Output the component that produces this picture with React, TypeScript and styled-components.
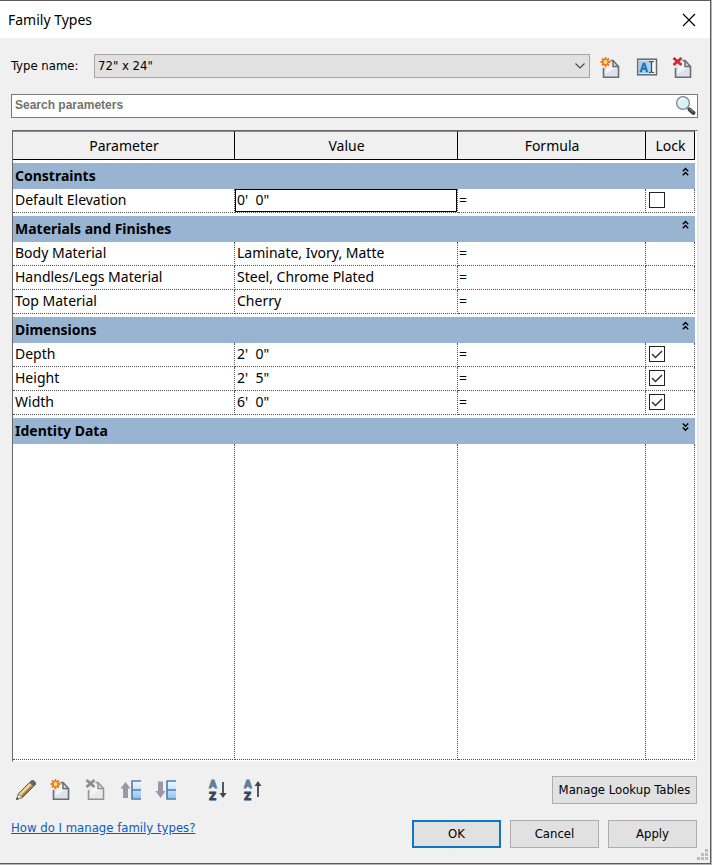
import React, { useState } from "react";
import styled, { createGlobalStyle, css } from "styled-components";

const uiFont = '"DejaVu Sans Condensed", Tahoma, "Noto Sans", sans-serif';
const gridFont = '"Noto Sans", "Open Sans", sans-serif';

const GlobalStyle = createGlobalStyle`
  *, *::before, *::after { box-sizing: border-box; }
  body { margin: 0; background: #a9a9a9; }
`;

const Desktop = styled.div`
  height: 100vh;
  min-height: 640px;
  padding: 0 1px 1px 0;
  background: #b4b4b4;
`;

const Dialog = styled.main`
  display: flex;
  flex-direction: column;
  height: 100%;
  border: 1px solid #5c5c5c;
  border-left: 0;
  background: #f0f0f0;
  color: #000;
  font: 13px/20px ${uiFont};
`;

const TitleBar = styled.header`
  display: flex;
  align-items: center;
  justify-content: space-between;
  height: 37px;
  padding: 0 14px 0 8px;
  background: #fff;
`;

const Title = styled.h1`
  margin: 0;
  font: 14px/20px ${gridFont};
`;

const IconButton = styled.button`
  display: flex;
  align-items: center;
  justify-content: center;
  padding: 0;
  border: 0;
  background: none;
  color: inherit;
`;

const Body = styled.div`
  display: flex;
  flex: 1;
  flex-direction: column;
  min-height: 0;
  padding: 16px 12px 15px 11px;
`;

const TypeRow = styled.div`
  display: flex;
  align-items: center;
  height: 24px;
`;

const TypeLabel = styled.label`
  flex: 0 0 83px;
`;

const SelectWrap = styled.div`
  display: grid;
  flex: 1;
  align-items: center;

  > * { grid-area: 1 / 1; }
  > svg { justify-self: end; margin-right: 4px; pointer-events: none; }
`;

const TypeSelect = styled.select`
  width: 100%;
  height: 24px;
  padding: 0 20px 0 3px;
  border: 1px solid #a6a6a6;
  border-radius: 0;
  background: #e1e1e1;
  color: #000;
  font: 13px/20px ${uiFont};
  appearance: none;
`;

const TypeActions = styled.div`
  display: flex;
  gap: 14px;
  margin: 0 4px 0 10px;
  padding-top: 3px;
`;

const SearchBox = styled.div`
  display: flex;
  align-items: center;
  height: 24px;
  margin-top: 16px;
  border: 1px solid #7a7a7a;
  background: #fff;
`;

const SearchInput = styled.input`
  flex: 1;
  min-width: 0;
  height: 22px;
  padding: 0 3px 2px;
  border: 0;
  outline: 0;
  background: transparent;
  font: bold 12px/20px "Liberation Sans", Arial, sans-serif;

  &::placeholder { color: #72726a; opacity: 1; }
`;

const GridFrame = styled.div`
  flex: 1;
  min-height: 0;
  margin: 12px 0 0 1px;
  padding: 0 2px 1px 0;
  border: 1px solid;
  border-color: #696969 #e3e3e3 #f8f8f8 #696969;
  background: #fff;
`;

const Grid = styled.table`
  width: 100%;
  height: 100%;
  table-layout: fixed;
  border-collapse: separate;
  border-spacing: 0;
  font: 14px/20px ${gridFont};
`;

const Column = styled.col<{ $width?: string }>`
  width: ${(p) => p.$width ?? "auto"};
`;

const HeadCell = styled.th`
  height: 29px;
  padding: 1px 0 0 1px;
  border-top: 1px solid #8a8a8a;
  border-right: 1px solid #000;
  border-bottom: 1px solid #000;
  background: #f0f0f0;
  font-weight: 400;
`;

const GapRow = styled.tr`
  height: 3px;
  td { padding: 0; }
`;

const BandCell = styled.th`
  height: 26px;
  padding: 0 0 0 2px;
  background: #99b4d1;
  text-align: left;
`;

const BandContent = styled.div`
  display: flex;
  justify-content: space-between;
  height: 26px;
  line-height: 26px;
`;

const BandToggle = styled(IconButton)`
  width: 19px;
  height: 17px;
`;

const cell = css`
  height: 24px;
  padding: 0 2px 2px;
  border-right: 1px dotted #555;
  border-bottom: 1px dotted #555;
  font-weight: 400;
  text-align: left;
  white-space: pre;
`;

const NameCell = styled.th`${cell}`;
const DataCell = styled.td<{ $edit?: boolean; $formula?: boolean }>`
  ${cell}
  ${(p) => p.$edit && "padding: 0;"}
  ${(p) => p.$formula && "padding-left: 1px;"}
`;

const LockCell = styled.td`
  ${cell}
  padding: 0 3px 1px;
`;

const FillCell = styled.td`
  ${cell}
  height: auto;
`;

const ValueInput = styled.input`
  display: block;
  width: 100%;
  height: 23px;
  padding: 0 1px 2px;
  border: 1px solid #000;
  border-radius: 0;
  outline: 0;
  background: #fff;
  font: 14px/20px ${gridFont};
`;

const LockBox = styled.input`
  width: 16px;
  height: 16px;
  margin: 0;
  border: 1px solid #222;
  background: #fff;
  appearance: none;
`;

const CheckWrap = styled.label`
  display: grid;
  width: 16px;
  height: 16px;

  > * { grid-area: 1 / 1; }
  > svg { pointer-events: none; }
  input:not(:checked) + svg { visibility: hidden; }
`;

const FooterRow = styled.div<{ $top: number }>`
  display: flex;
  align-items: center;
  justify-content: space-between;
  height: 28px;
  margin-top: ${(p) => p.$top}px;
`;

const ToolGroup = styled.div`
  display: flex;
  gap: 13px;
  margin-left: 4px;
  padding-bottom: 1px;
`;

const SortGroup = styled.div`
  display: flex;
  gap: 13px;
  margin-left: 17px;
`;

const Buttons = styled.div`
  display: flex;
  gap: 9px;
  padding-right: 1px;
`;

const PushButton = styled.button<{ $primary?: boolean; $wide?: boolean }>`
  width: ${(p) => (p.$wide ? 145 : 89)}px;
  height: 28px;
  padding: 0;
  border: ${(p) => (p.$primary ? "2px solid #0f76c4" : "1px solid #adadad")};
  border-radius: 0;
  background: #e1e1e1;
  color: #000;
  font: 13px/20px ${uiFont};
  white-space: nowrap;
`;

const HelpLink = styled.a`
  align-self: flex-start;
  margin-top: -2px;
  color: #0b5cc0;
`;

const Grip = styled.div`
  display: flex;
  justify-content: flex-end;
  height: 14px;
  margin-top: -14px;
  padding: 0 1px 0 0;
`;

const CloseIcon = () => (
  <svg width="14" height="14" viewBox="0 0 14 14" stroke="#000" strokeWidth="1.2">
    <path d="M1 1 13 13M13 1 1 13" />
  </svg>
);

const ChevronIcon = () => (
  <svg width="12" height="8" viewBox="0 0 12 8" fill="none" stroke="#444" strokeWidth="1.1">
    <path d="M1.5 1.5 6 6 10.500 1.5" />
  </svg>
);

const Page = ({ muted = false }: { muted?: boolean }) => (
  <>
    <path d="M3.500 20.200V4H12.500L18.500 9.500V20.200Z" fill={muted ? "#e9e9ea" : "#dfe2ec"} />
    <path d="M8 5h4.500v5.500H16L5 17Z" fill="#f4f4f7" />
    <path
      d="M3.500 11V20.200H18.500V9.500L13 3.500H10.500"
      fill="none"
      stroke={muted ? "#949496" : "#6a6d72"}
      strokeWidth="1.6"
    />
    <path d="M13 4v5.500h5" fill="none" stroke={muted ? "#949496" : "#6a6d72"} strokeWidth="1.500" />
  </>
);

const NewIcon = () => (
  <svg width="22" height="22" viewBox="0 0 22 22">
    <Page />
    <path d="M5.500 0v10M.5 5h10M2 1.500l7 7M9 1.500l-7 7" stroke="#e77817" strokeWidth="1.800" />
    <circle cx="5.500" cy="5" r="3.300" fill="#ed7b14" />
    <circle cx="5.500" cy="5" r="1.900" fill="#ffe09a" />
  </svg>
);

const DeleteIcon = ({ muted = false }: { muted?: boolean }) => (
  <svg width="22" height="22" viewBox="0 0 22 22">
    <Page muted={muted} />
    <path d="m1.500 1 8 7M9.500 1l-8 7" stroke={muted ? "#8e8e8e" : "#c92d31"} strokeWidth="2.800" />
  </svg>
);

const RenameIcon = () => (
  <svg width="22" height="22" viewBox="0 0 22 22">
    <rect x="1.700" y="2.200" width="18.800" height="15.600" fill="#f5f7f9" stroke="#626a73" strokeWidth="1.500" />
    <rect x="3" y="3.500" width="12" height="13" fill="#a9d0ee" />
    <text x="3.500" y="14.500" fontFamily="Liberation Sans" fontWeight="700" fontSize="12" fill="#176bb0" stroke="#176bb0" strokeWidth=".4">A</text>
    <path d="M13 4.500h1.500l1 1 1-1H18M15.500 5.500v9M13 15.500h1.500l1-1 1 1H18" fill="none" stroke="#444" strokeWidth="1.200" />
  </svg>
);

const SearchIcon = () => (
  <svg width="22" height="22" viewBox="0 0 22 22">
    <path d="m12.500 12.500 2.500 2" stroke="#888" strokeWidth="2" />
    <path d="m14.500 14.500 4 3.500" stroke="#41464a" strokeWidth="4" strokeLinecap="round" />
    <path d="m15 14 3 2.500" stroke="#9ba1a5" strokeWidth="1" />
    <circle cx="8" cy="8" r="6.400" fill="#d6f2f4" stroke="#7b898e" strokeWidth="1.300" />
    <path d="M4 8a4 4 0 0 1 5-4" fill="none" stroke="#fff" strokeWidth="2" />
  </svg>
);

const PencilIcon = () => (
  <svg width="22" height="22" viewBox="0 0 22 22">
    <path d="m1.500 20.500 2-6L15.500 2.500q2-2 4 0t0 4L7.500 18.500Z" fill="#c7a263" stroke="#655941" />
    <path d="M5 15.500 16 4.500" stroke="#f3dba7" strokeWidth="2" />
    <path d="m7 17.500 9.500-9.500" stroke="#8e713e" strokeWidth="1.500" />
    <path d="m14.500 3.500 1.500-1.500q2-1.500 4 .5t0 4L18.500 8Z" fill="#65676b" />
    <path d="m1.500 20.500 2-5.500 3.500 3.500Z" fill="#eee5d7" stroke="#777" strokeWidth=".6" />
    <path d="m1.300 20.700.8-2.500 1.700 1.700Z" fill="#444" />
  </svg>
);

const MoveIcon = ({ down = false }: { down?: boolean }) => (
  <svg width="22" height="22" viewBox="0 0 22 22">
    <defs>
      <linearGradient id={down ? "moveDown" : "moveUp"} x1="0" y1="0" x2="0" y2="1">
        <stop stopColor="#f6fbff" />
        <stop offset="1" stopColor="#8dc5f0" />
      </linearGradient>
    </defs>
    <path
      d={down ? "M3 2.500h5v9.500h2.500l-5 7-5-7H3Z" : "M5.500 3l5 6.500H8V19H3V9.500H.5Z"}
      fill="#9c97a4"
    />
    <path d="M12 2h9v8.500h-9ZM12 11h9v8.500h-9Z" fill={`url(#${down ? "moveDown" : "moveUp"})`} />
    <path d="M21 2h-9v18h9M12 11h9" fill="none" stroke="#5279b0" strokeWidth="1.600" />
  </svg>
);

const SortIcon = ({ up = false }: { up?: boolean }) => (
  <svg width="22" height="22" viewBox="0 0 22 22" fontFamily="DejaVu Sans" fontWeight="700" fontSize="10">
    <text x="2" y="9" fill="#5f7c9b" stroke="#5f7c9b" strokeWidth=".9">A</text>
    <text x="2" y="21" fill="#34485d" stroke="#34485d" strokeWidth=".9">Z</text>
    <path d={up ? "M16 18V5" : "M16 3v14"} stroke="#3c4856" strokeWidth="1.800" />
    <path d={up ? "m16 2 3.500 5h-7Z" : "m16 19 3.500-5h-7Z"} fill="#3c4856" />
  </svg>
);

const FoldIcon = ({ open }: { open: boolean }) => (
  <svg width="7" height="10" viewBox="0 0 7 10" fill="none" stroke="#000" strokeWidth="1.500">
    <path d={open ? "M.8 4.200 3.500 1.500 6.200 4.200M.8 8.200 3.500 5.500 6.200 8.200" : "M.8 1.500 3.500 4.200 6.200 1.500M.8 5.500 3.500 8.200 6.200 5.500"} />
  </svg>
);

const TickIcon = () => (
  <svg width="16" height="16" viewBox="0 0 16 16" fill="none" stroke="#333" strokeWidth="1.500">
    <path d="m3 8 3.500 3.500L13 5" />
  </svg>
);

const GripIcon = () => (
  <svg width="12" height="12" viewBox="0 0 12 12" fill="#bcbcbc">
    <path d="M8 0h3v3H8ZM4 4h3v3H4ZM8 4h3v3H8ZM0 8h3v3H0ZM4 8h3v3H4ZM8 8h3v3H8Z" />
  </svg>
);

type Param = { name: string; value: string; edit?: boolean; lock?: boolean };
type Group = { title: string; open: boolean; params: Param[] };

const initialGroups: Group[] = [
  { title: "Constraints", open: true, params: [{ name: "Default Elevation", value: "0'  0\"", edit: true, lock: false }] },
  {
    title: "Materials and Finishes",
    open: true,
    params: [
      { name: "Body Material", value: "Laminate, Ivory, Matte" },
      { name: "Handles/Legs Material", value: "Steel, Chrome Plated" },
      { name: "Top Material", value: "Cherry" },
    ],
  },
  {
    title: "Dimensions",
    open: true,
    params: [
      { name: "Depth", value: "2'  0\"", lock: true },
      { name: "Height", value: "2'  5\"", lock: true },
      { name: "Width", value: "6'  0\"", lock: true },
    ],
  },
  { title: "Identity Data", open: false, params: [] },
];

const ParamRow = ({ param }: { param: Param }) => (
  <tr>
    <NameCell scope="row">{param.name}</NameCell>
    <DataCell $edit={param.edit}>
      {param.edit ? <ValueInput aria-label={param.name} defaultValue={param.value} /> : param.value}
    </DataCell>
    <DataCell $formula>=</DataCell>
    <LockCell>
      {param.lock !== undefined && (
        <CheckWrap>
          <LockBox type="checkbox" aria-label={`Lock ${param.name}`} defaultChecked={param.lock} />
          <TickIcon />
        </CheckWrap>
      )}
    </LockCell>
  </tr>
);

export default function App() {
  const [groups, setGroups] = useState(initialGroups);
  const toggle = (title: string) =>
    setGroups((all) => all.map((g) => (g.title === title ? { ...g, open: !g.open } : g)));

  return (
    <Desktop>
      <GlobalStyle />
      <Dialog>
        <TitleBar>
          <Title>Family Types</Title>
          <IconButton aria-label="Close"><CloseIcon /></IconButton>
        </TitleBar>
        <Body>
          <TypeRow>
            <TypeLabel htmlFor="type-name">Type name:</TypeLabel>
            <SelectWrap>
              <TypeSelect id="type-name">
                <option>72" x 24"</option>
              </TypeSelect>
              <ChevronIcon />
            </SelectWrap>
            <TypeActions>
              <IconButton aria-label="New type"><NewIcon /></IconButton>
              <IconButton aria-label="Rename type"><RenameIcon /></IconButton>
              <IconButton aria-label="Delete type"><DeleteIcon /></IconButton>
            </TypeActions>
          </TypeRow>
          <SearchBox>
            <SearchInput aria-label="Search parameters" placeholder="Search parameters" />
            <IconButton aria-label="Search"><SearchIcon /></IconButton>
          </SearchBox>
          <GridFrame>
            <Grid>
              <colgroup>
                <Column $width="222px" />
                <Column $width="223px" />
                <Column />
                <Column $width="49px" />
              </colgroup>
              <thead>
                <tr>
                  <HeadCell scope="col">Parameter</HeadCell>
                  <HeadCell scope="col">Value</HeadCell>
                  <HeadCell scope="col">Formula</HeadCell>
                  <HeadCell scope="col">Lock</HeadCell>
                </tr>
              </thead>
              <tbody>
                {groups.map((group) => (
                  <React.Fragment key={group.title}>
                    <GapRow><td colSpan={4} /></GapRow>
                    <tr>
                      <BandCell colSpan={4} scope="colgroup">
                        <BandContent>
                          {group.title}
                          <BandToggle
                            aria-label={`Toggle ${group.title}`}
                            aria-expanded={group.open}
                            onClick={() => toggle(group.title)}
                          >
                            <FoldIcon open={group.open} />
                          </BandToggle>
                        </BandContent>
                      </BandCell>
                    </tr>
                    {group.open && group.params.map((p) => <ParamRow key={p.name} param={p} />)}
                  </React.Fragment>
                ))}
                <tr>
                  <FillCell /><FillCell /><FillCell /><FillCell />
                </tr>
              </tbody>
            </Grid>
          </GridFrame>
          <FooterRow $top={14}>
            <ToolGroup>
              <IconButton aria-label="Edit parameter"><PencilIcon /></IconButton>
              <IconButton aria-label="New parameter"><NewIcon /></IconButton>
              <IconButton aria-label="Delete parameter" disabled><DeleteIcon muted /></IconButton>
              <IconButton aria-label="Move up"><MoveIcon /></IconButton>
              <IconButton aria-label="Move down"><MoveIcon down /></IconButton>
              <SortGroup>
                <IconButton aria-label="Sort ascending"><SortIcon /></IconButton>
                <IconButton aria-label="Sort descending"><SortIcon up /></IconButton>
              </SortGroup>
            </ToolGroup>
            <Buttons><PushButton $wide>Manage Lookup Tables</PushButton></Buttons>
          </FooterRow>
          <FooterRow $top={16}>
            <HelpLink href="#help">How do I manage family types?</HelpLink>
            <Buttons>
              <PushButton $primary>OK</PushButton>
              <PushButton>Cancel</PushButton>
              <PushButton>Apply</PushButton>
            </Buttons>
          </FooterRow>
        </Body>
        <Grip><GripIcon /></Grip>
      </Dialog>
    </Desktop>
  );
}
